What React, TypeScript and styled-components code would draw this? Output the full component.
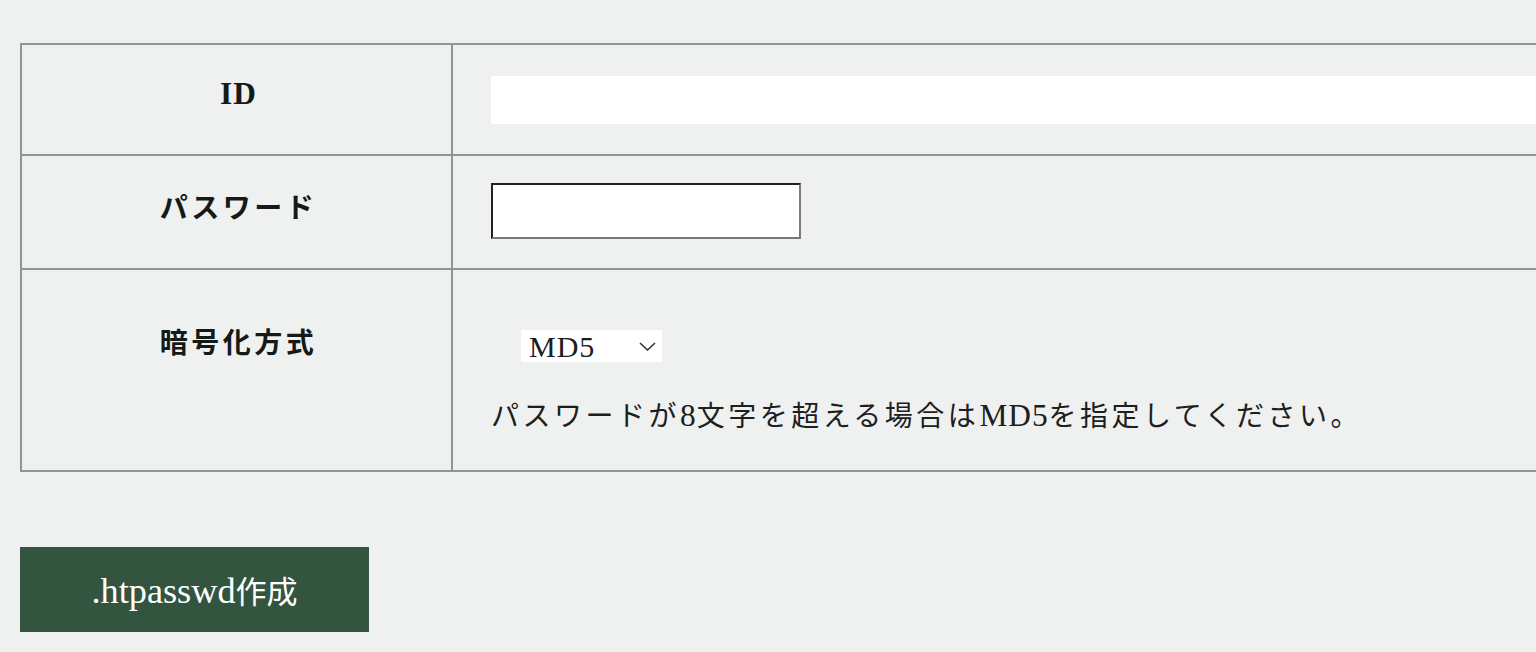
import React from 'react';
import styled, {createGlobalStyle} from 'styled-components';

const GlobalStyle = createGlobalStyle`
  html, body {
    margin: 0;
    padding: 0;
    background: #eff1f0;
    overflow: hidden;
  }
  body {
    font-family: "Liberation Serif", "Noto Sans CJK JP", serif;
    color: #1b201e;
  }
`;

// Latin runs are set a little larger, as in the original mincho face
const Latin = styled.span`
  font-size: 1.12em;
  letter-spacing: 1px;
`;

const Page = styled.div`
  padding: 43px 0 0 20px;
  width: 1700px;
`;

const FormTable = styled.table`
  width: 1640px;
  border-collapse: collapse;
  table-layout: fixed;
  font-size: 28px;
  letter-spacing: 3.5px;
`;

const Row = styled.tr``;

const Label = styled.th<{$top: number}>`
  width: 431px;
  box-sizing: border-box;
  border: 2px solid #8b9894;
  padding: ${p => p.$top}px 0 0 4px;
  line-height: 40px;
  text-align: center;
  vertical-align: top;
  font-weight: bold;
  color: #141a17;
`;

const Field = styled.td<{$top: number; $bottom: number}>`
  border: 2px solid #8b9894;
  padding: ${p => `${p.$top}px 38px ${p.$bottom}px`};
  vertical-align: top;
`;

const TextInput = styled.input<{$wide?: boolean}>`
  display: block;
  box-sizing: border-box;
  font-family: inherit;
  font-size: 28px;
  background: #fff;
  margin: 0;
  padding: 0 8px;
  width: ${p => (p.$wide ? '100%' : '310px')};
  height: ${p => (p.$wide ? '48px' : '56px')};
  border: ${p => (p.$wide ? 'none' : '2px solid')};
  border-color: #222 #7a7a7a #7a7a7a #222;
  outline: none;
`;

const SelectWrap = styled.div`
  position: relative;
  width: 141px;
  margin: 29px 0 0 30px;
  background: #fff;
`;

const Select = styled.select`
  appearance: none;
  -webkit-appearance: none;
  display: block;
  box-sizing: border-box;
  width: 141px;
  height: 32px;
  margin: 0;
  padding: 0 0 0 8px;
  border: none;
  border-radius: 0;
  background: transparent;
  font-family: inherit;
  font-size: 30px;
  letter-spacing: 1px;
  color: #1b201e;
  outline: none;
`;

const Chevron = styled.svg`
  position: absolute;
  right: 6px;
  top: 12px;
  pointer-events: none;
`;

const Note = styled.p`
  margin: 32px 0 0;
  line-height: 44.8px;
  font-weight: normal;
`;

const SubmitButton = styled.button`
  display: block;
  margin-top: 75px;
  width: 349px;
  height: 85px;
  padding: 0;
  border: none;
  background: #33553f;
  color: #fff;
  font-family: "Liberation Serif", "Noto Sans CJK JP", serif;
  font-size: 31px;
  letter-spacing: 0;
  cursor: pointer;

  ${Latin} {
    font-size: 1.17em;
    letter-spacing: 0;
  }
`;

const App = () => {
    const [method, setMethod] = React.useState('md5');
    return (
        <>
            <GlobalStyle/>
            <Page>
                <FormTable>
                    <tbody>
                    <Row>
                        <Label $top={29}><Latin>ID</Latin></Label>
                        <Field $top={31} $bottom={30}>
                            <TextInput $wide type="text"/>
                        </Field>
                    </Row>
                    <Row>
                        <Label $top={33}>パスワード</Label>
                        <Field $top={27} $bottom={29}>
                            <TextInput type="password"/>
                        </Field>
                    </Row>
                    <Row>
                        <Label $top={54}>暗号化方式</Label>
                        <Field $top={31} $bottom={30}>
                            <SelectWrap>
                                <Select value={method} onChange={e => setMethod(e.target.value)}>
                                    <option value="md5">MD5</option>
                                    <option value="crypt">CRYPT</option>
                                    <option value="sha">SHA</option>
                                </Select>
                                <Chevron width="17" height="9" viewBox="0 0 17 9">
                                    <polyline points="1,1 8.5,8 16,1" fill="none" stroke="#333" strokeWidth="1.6"/>
                                </Chevron>
                            </SelectWrap>
                            <Note>
                                パスワードが<Latin>8</Latin>文字を超える場合は<Latin>MD5</Latin>を指定してください。
                            </Note>
                        </Field>
                    </Row>
                    </tbody>
                </FormTable>
                <SubmitButton type="button"><Latin>.htpasswd</Latin>作成</SubmitButton>
            </Page>
        </>
    );
};

export default App;
